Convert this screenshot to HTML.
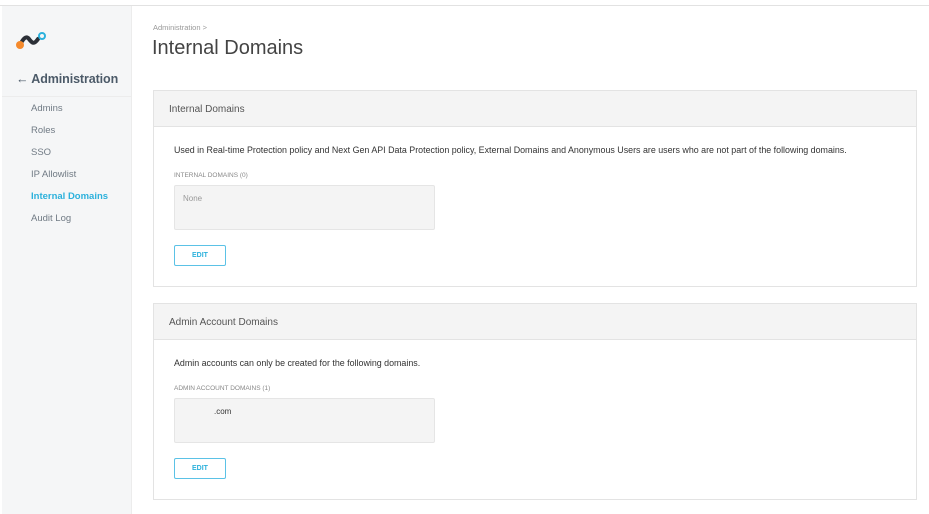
<!DOCTYPE html>
<html><head><style>
*{margin:0;padding:0;box-sizing:border-box}
body{width:929px;height:514px;background:#fff;font-family:"Liberation Sans",sans-serif;position:relative;overflow:hidden}
.top{position:absolute;left:0;top:5px;width:929px;height:1px;background:#e2e2e2}
.side{position:absolute;left:2px;top:6px;width:130px;height:508px;background:#f5f6f7;border-right:1px solid #ececec}
.side .t{position:absolute;left:14px;top:66px;font-size:12.5px;color:#4c5a68;font-weight:bold;letter-spacing:-0.1px}
.side .i{position:absolute;left:29px;font-size:9.5px;color:#707a84}
.side .a{color:#2cb1dc;font-weight:bold}
.bc{position:absolute;left:153px;top:23px;font-size:7.5px;color:#999}
h1{position:absolute;left:152px;top:37px;font-size:20px;font-weight:normal;color:#444}
.card{position:absolute;left:153px;width:764px;height:197px;border:1px solid #e3e3e3;background:#fff}
.card .h{height:36px;background:#f4f4f4;border-bottom:1px solid #e3e3e3;font-size:10px;color:#555;padding:13px 0 0 15px}
.card .d{position:absolute;left:20px;top:54px;font-size:8.9px;color:#333;white-space:nowrap}
.card .l{position:absolute;left:20px;top:81px;font-size:6.5px;color:#888}
.card .box{position:absolute;left:20px;top:94px;width:261px;height:45px;background:#f4f4f4;border:1px solid #e5e5e5;border-radius:2px;font-size:8px;color:#999;padding:8px 0 0 8px}
.card .b{position:absolute;left:20px;top:154px;width:52px;height:21px;border:1px solid #5bc2e6;border-radius:2px;font-size:7px;font-weight:bold;color:#2cb1dc;text-align:center;line-height:19px}
</style></head><body>
<div class="top"></div>
<div class="side">
<svg style="position:absolute;left:12px;top:25px" width="36" height="20" viewBox="0 0 36 20">
<path d="M6 14 C9 8 12 4 15 8 C18 12 20 14 24 8" stroke="#2b2f36" stroke-width="4" fill="none" stroke-linecap="round"/>
<circle cx="6" cy="14" r="4" fill="#f58a2c"/>
<circle cx="28" cy="5" r="3" fill="none" stroke="#2cb1dc" stroke-width="2"/>
</svg>
<div class="t">← Administration</div>
<div style="position:absolute;left:0;top:90px;width:129px;height:1px;background:#ececec"></div>
<div class="i" style="top:97px">Admins</div>
<div class="i" style="top:119px">Roles</div>
<div class="i" style="top:141px">SSO</div>
<div class="i" style="top:163px">IP Allowlist</div>
<div class="i a" style="top:185px">Internal Domains</div>
<div class="i" style="top:207px">Audit Log</div>
</div>
<div class="bc">Administration &gt;</div>
<h1>Internal Domains</h1>
<div class="card" style="top:90px">
<div class="h">Internal Domains</div>
<div class="d">Used in Real-time Protection policy and Next Gen API Data Protection policy, External Domains and Anonymous Users are users who are not part of the following domains.</div>
<div class="l">INTERNAL DOMAINS (0)</div>
<div class="box">None</div>
<div class="b">EDIT</div>
</div>
<div class="card" style="top:303px">
<div class="h">Admin Account Domains</div>
<div class="d">Admin accounts can only be created for the following domains.</div>
<div class="l">ADMIN ACCOUNT DOMAINS (1)</div>
<div class="box" style="color:#333;padding-left:39px">.com</div>
<div class="b">EDIT</div>
</div>
</body></html>
